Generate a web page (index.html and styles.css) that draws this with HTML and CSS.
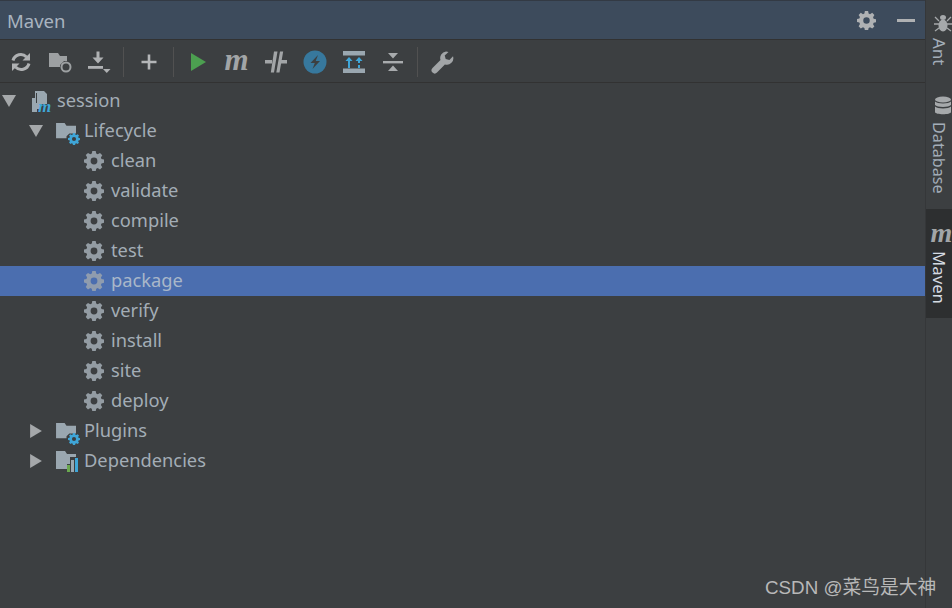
FILE: index.html
```html
<!DOCTYPE html>
<html lang="en">
<head>
<meta charset="utf-8">
<title>Maven</title>
<link rel="stylesheet" href="styles.css">
</head>
<body>
<svg class="defs" width="0" height="0" aria-hidden="true">
  <symbol id="gear" viewBox="0 0 20 20">
    <path fill-rule="evenodd" d="M8.300 0h3.400l.5 2.600 1.500.7 2.300-1.400 2.300 2.400-1.400 2.200.6 1.600 2.500.5v3.200l-2.500.6-.6 1.500 1.400 2.300-2.300 2.300-2.300-1.400-1.500.7-.5 2.600H8.300l-.5-2.600-1.500-.7-2.300 1.400L1.700 16l1.400-2.300-.6-1.500-2.500-.6V8.400l2.500-.5.6-1.600-1.400-2.200L4 1.900l2.300 1.400 1.500-.7zM10 6.600a3.400 3.400 0 1 0 0 6.800 3.400 3.400 0 0 0 0-6.800z"/>
  </symbol>
  <symbol id="folder" viewBox="0 0 22 20">
    <path d="M0 1h9l2 3h10v8h-7l-3 3v2H0z"/>
  </symbol>
</svg>
<div class="app">
  <main class="panel">
    <header class="title">
      <span class="title-text">Maven</span>
      <svg class="title-gear"><use href="#gear"/></svg>
      <span class="title-min"></span>
    </header>
    <div class="toolbar">
      <span class="tool"><svg width="22" height="22" viewBox="0 0 22 22" fill="none" stroke="#afb1b3" stroke-width="3"><path d="M3 9.500A8 8 0 0 1 16.500 6"/><path d="M19 12.500A8 8 0 0 1 5.500 16"/><path d="M20 2v7.500h-7.500z" fill="#afb1b3" stroke="none"/><path d="M2 20v-7.500h7.500z" fill="#afb1b3" stroke="none"/></svg></span>
      <span class="tool"><svg width="24" height="24" viewBox="0 0 24 24"><path fill="#9da0a2" d="M1 3h9l2 3h7v5h-3l-4 4v2H1z"/><circle cx="18" cy="17" r="4.500" fill="none" stroke="#9da0a2" stroke-width="2"/></svg></span>
      <span class="tool"><svg width="24" height="24" viewBox="0 0 24 24" fill="#afb1b3"><path d="M9.500 1.500h3v6h4l-5.500 6-5.500-6h4z"/><path d="M1 16h15v2.800H1z"/><path d="M16 19h7.500l-3.750 4z"/></svg></span>
      <span class="sep"></span>
      <span class="tool"><svg width="18" height="18" viewBox="0 0 18 18" fill="#b4b6b8"><path d="M7.700 1.500h2.600v6.200h6.200v2.600h-6.200v6.200H7.700v-6.200H1.500V7.700h6.200z"/></svg></span>
      <span class="sep sep-tight"></span>
      <span class="tool"><svg width="18" height="20" viewBox="0 0 18 20"><path fill="#4c9f50" d="M2 1l15 9-15 9z"/></svg></span>
      <span class="tool"><span class="m-glyph">m</span></span>
      <span class="tool"><svg width="24" height="24" viewBox="0 0 24 24" fill="#a2a5a7"><path d="M1 10h7v3.500H1zM16.500 10H23v3.500h-6.500z"/><path d="M10 1.500h3.500l-3.500 21H6.800zM16 1.500h3.200l-3.700 21H12.300z"/></svg></span>
      <span class="tool"><svg width="24" height="24" viewBox="0 0 24 24"><circle cx="12" cy="12" r="11.500" fill="#3592c4" opacity=".7"/><path fill="#3c3f41" d="M15 5L7.500 13h4.300L9.500 19l7.500-8h-4.300z"/></svg></span>
      <span class="tool"><svg width="24" height="24" viewBox="0 0 24 24"><path fill="#9aa7b0" d="M1 1h22v4.500H1zM1 18.500h22V23H1z"/><path fill="#3fa6d8" d="M7 7l3.500 4H8v7H6v-7H3.500zM17 7l3.500 4H18v2h-2v-2h-2.500zM16 15h2v3h-2z"/></svg></span>
      <span class="tool"><svg width="22" height="24" viewBox="0 0 22 24" fill="#a8abad"><path d="M1 11h20v2.400H1z"/><path d="M6 3h10l-5 5.500zM6 21h10l-5-5.500z"/></svg></span>
      <span class="sep"></span>
      <span class="tool"><svg width="24" height="24" viewBox="0 0 24 24"><path fill="#a2a5a7" d="M15 1.500a6.300 6.300 0 0 1 2.500.5l-3.800 3.500 1 3.500 3.700 1 3.600-3.700a6.500 6.500 0 0 1-8.100 8.200L6 22.500a2.500 2.500 0 0 1-4.500-4.500l8-8A6.500 6.500 0 0 1 15 1.500z"/></svg></span>
    </div>
    <ul class="tree">
      <li class="row"><span class="arrow down"></span><svg class="icon" viewBox="0 0 24 24"><path fill="#9aa7b0" d="M3 9h3V2h9l3 3v10h-5l-2 5H8v3H3z"/><path fill="#3c3f41" d="M7 4h1v10H7z"/><text class="icon-m" x="9" y="23">m</text></svg><span class="label">session</span></li>
      <li class="row d1"><span class="arrow down"></span><svg class="icon"><use href="#folder" class="fill-folder" y="3" width="21" height="19"/><use href="#gear" class="badge" x="12" y="14" width="12" height="12"/></svg><span class="label">Lifecycle</span></li>
      <li class="row goal"><svg class="goal-icon"><use href="#gear"/></svg><span class="label">clean</span></li>
      <li class="row goal"><svg class="goal-icon"><use href="#gear"/></svg><span class="label">validate</span></li>
      <li class="row goal"><svg class="goal-icon"><use href="#gear"/></svg><span class="label">compile</span></li>
      <li class="row goal"><svg class="goal-icon"><use href="#gear"/></svg><span class="label">test</span></li>
      <li class="row goal selected"><svg class="goal-icon"><use href="#gear"/></svg><span class="label">package</span></li>
      <li class="row goal"><svg class="goal-icon"><use href="#gear"/></svg><span class="label">verify</span></li>
      <li class="row goal"><svg class="goal-icon"><use href="#gear"/></svg><span class="label">install</span></li>
      <li class="row goal"><svg class="goal-icon"><use href="#gear"/></svg><span class="label">site</span></li>
      <li class="row goal"><svg class="goal-icon"><use href="#gear"/></svg><span class="label">deploy</span></li>
      <li class="row d1"><span class="arrow right"></span><svg class="icon"><use href="#folder" class="fill-folder" y="3" width="21" height="19"/><use href="#gear" class="badge" x="12" y="14" width="12" height="12"/></svg><span class="label">Plugins</span></li>
      <li class="row d1"><span class="arrow right"></span><svg class="icon" viewBox="0 0 24 24"><path fill="#9aa7b0" d="M0 2h9l2 3h9v3h-6v7h-3v5H0z"/><path fill="#6aa84f" d="M11 16h3v7h-3z"/><path fill="#9aa7b0" d="M15 11h3v12h-3z"/><path fill="#3fa6d8" d="M19 9h3v14h-3z"/></svg><span class="label">Dependencies</span></li>
    </ul>
  </main>
  <aside class="sidebar">
    <div class="tab tab-ant">
      <svg class="tab-icon" width="18" height="20" viewBox="0 0 18 20" fill="#a6a9ab" stroke="#a6a9ab"><ellipse cx="9" cy="4.500" rx="3" ry="2.500" stroke="none"/><ellipse cx="9" cy="12.500" rx="4.500" ry="6" stroke="none"/><path fill="none" stroke-width="1.300" d="M1 4l4 4M17 4l-4 4M0 11h5M18 11h-5M1 18l4-3M17 18l-4-3"/></svg>
      <span class="tab-text">Ant</span>
    </div>
    <div class="tab tab-db">
      <svg class="tab-icon" width="18" height="20" viewBox="0 0 18 20"><ellipse cx="9" cy="3.500" rx="8" ry="3" fill="#a6a9ab"/><path fill="#a6a9ab" d="M1 5.500c2 2.500 14 2.500 16 0v3.500c-2 2.500-14 2.500-16 0zM1 10.500c2 2.500 14 2.500 16 0V16c0 3-16 3-16 0z"/></svg>
      <span class="tab-text">Database</span>
    </div>
    <div class="tab tab-maven">
      <span class="m-glyph side-m">m</span>
      <span class="tab-text">Maven</span>
    </div>
  </aside>
</div>
<div class="watermark">CSDN @菜鸟是大神</div>
</body>
</html>
```
FILE: styles.css
```css
* { box-sizing: border-box; }
html, body { margin: 0; height: 100%; }
body {
  background: #3c3f41;
  font-family: "Noto Sans", "Open Sans", sans-serif;
  color: #a9b7c6;
  overflow: hidden;
  position: relative;
}
.defs { position: absolute; }
.app { display: flex; height: 608px; }
.panel { width: 925px; display: flex; flex-direction: column; background: #3c3f41; }
.title {
  height: 40px;
  flex: none;
  display: flex;
  align-items: center;
  padding: 0 8px;
  background: #3d4b5c;
  border-top: 1px solid #333a44;
  border-bottom: 1px solid #323232;
}
.title-text { font-size: 18.500px; color: #a9b4c0; flex: 1; margin-left: -1px; }
.title-gear { width: 19px; height: 19px; fill: #afb1b3; margin-right: 21px; }
.title-min { width: 18px; height: 3px; background: #afb1b3; margin-right: 2px; }
.toolbar {
  height: 43px;
  flex: none;
  display: flex;
  align-items: center;
  padding: 2px 0 0 1px;
  border-bottom: 1px solid #323232;
}
.tool { width: 39px; display: flex; justify-content: center; align-items: center; }
.sep { width: 1px; height: 30px; margin: 0 5px; background: #515151; }
.sep-tight { margin-right: 4px; }
.m-glyph {
  font-family: "Liberation Serif", serif;
  font-style: italic;
  font-weight: 700;
  font-size: 31px;
  line-height: 24px;
  color: #a2a5a7;
  height: 28px;
}
.tree { list-style: none; margin: 3px 0 0; padding: 0; }
.row {
  height: 30px;
  display: flex;
  align-items: center;
  padding-left: 2px;
  font-size: 18.300px;
}
.d1 { padding-left: 29px; }
.goal { padding-left: 84px; }
.selected { background: #4b6eaf; }
.arrow { flex: none; width: 14px; height: 14px; background: #a5a8aa; }
.arrow.down { clip-path: polygon(0 8%, 100% 8%, 50% 92%); }
.arrow.right { clip-path: polygon(8% 0, 92% 50%, 8% 100%); }
.icon { width: 24px; height: 24px; flex: none; margin-left: 13px; margin-right: 4px; fill: #9aa7b0; overflow: visible; }
.icon-m {
  font-family: "Liberation Serif", serif;
  font-style: italic;
  font-weight: 700;
  font-size: 17px;
  fill: #3fa6d8;
}
.fill-folder { fill: #9aa7b0; }
.badge { fill: #3fa6d8; }
.goal-icon { width: 20px; height: 20px; flex: none; fill: #939ca3; margin-right: 7px; }
.selected .goal-icon { fill: #8f9cae; }
.label { color: #a3adb6; line-height: 28px; margin-bottom: 2px; white-space: nowrap; }
.selected .label { color: #a9b7c9; }
.sidebar { width: 27px; display: flex; flex-direction: column; background: #3c3f41; border-left: 1px solid #353739; }
.tab { display: flex; flex-direction: column; align-items: center; }
.tab-ant { height: 89px; padding-top: 13px; }
.tab-db { height: 120px; padding-top: 7px; }
.tab-maven { height: 109px; padding-top: 12px; background: #2d2f30; overflow: hidden; }
.tab-icon { flex: none; margin-left: 6px; margin-right: -1px; }
.tab-text {
  writing-mode: vertical-rl;
  line-height: 20px;
  color: #a3adb8;
}
.tab-ant .tab-text { font-size: 17px; margin-top: 5px; }
.tab-db .tab-text { font-size: 16.200px; margin-top: 6px; }
.tab-maven .tab-text { font-size: 16.800px; color: #d5dbe2; margin-top: 4px; }
.side-m { font-size: 28px; margin-left: 5px; height: 26px; }
.watermark {
  position: absolute;
  left: 765px;
  top: 576px;
  font-family: "Liberation Sans", "Noto Sans CJK SC", sans-serif;
  font-size: 18.800px;
  line-height: 24px;
  color: #b8b8b8;
  white-space: nowrap;
}
```
